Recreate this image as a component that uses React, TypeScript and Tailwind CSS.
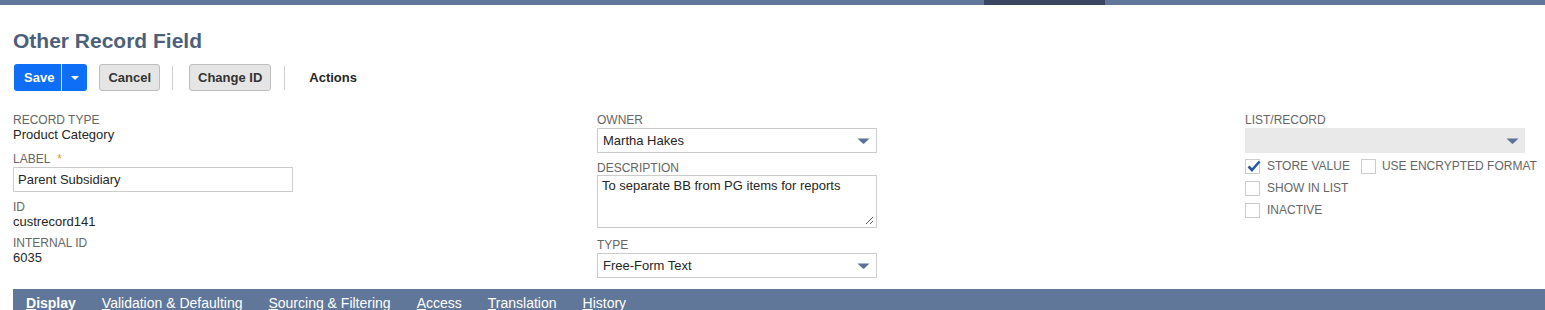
import React from 'react';

const font = { fontFamily: '"Liberation Sans", Arial, sans-serif' };

const Caret = ({ className = '' }: { className?: string }) => (
  <svg width="13" height="6" viewBox="0 0 13 6" className={className}>
    <path d="M0.5 0.5 H12.5 L7.2 5.4 Q6.5 6 5.8 5.4 Z" fill="#5b7399" />
  </svg>
);

const FieldLabel = ({ children }: { children: React.ReactNode }) => (
  <div className="text-[12px] leading-[14px] h-[14px] uppercase text-[#666]">{children}</div>
);

const FieldValue = ({ children }: { children: React.ReactNode }) => (
  <div className="text-[13px] leading-[16px] text-[#262626]">{children}</div>
);

const SelectBox = ({ value, disabled }: { value?: string; disabled?: boolean }) => (
  <div
    className={`flex items-center justify-between w-[280px] h-[25px] pl-[5px] pr-[6px] text-[13px] text-[#262626] ${
      disabled ? 'bg-[#e9e9e9]' : 'bg-white border border-[#cccccc]'
    }`}
  >
    <span>{value}</span>
    <Caret />
  </div>
);

const CheckBox = ({ checked }: { checked?: boolean }) => (
  <div className="relative w-[15px] h-[15px] border border-[#cccccc] bg-white shrink-0">
    {checked && (
      <svg width="14" height="12" viewBox="0 0 14 12" className="absolute left-[1px] top-[0px]">
        <path d="M1.5 6.5 L5 10 L12.5 1.5" fill="none" stroke="#2a5a9e" strokeWidth="2.6" />
      </svg>
    )}
  </div>
);

const tabs = [
  { key: 'D', rest: 'isplay', active: true },
  { key: 'V', rest: 'alidation & Defaulting' },
  { key: 'S', rest: 'ourcing & Filtering' },
  { key: 'A', rest: 'ccess' },
  { key: 'T', rest: 'ranslation' },
  { key: 'H', rest: 'istory' },
];

export default function App() {
  return (
    <div className="w-[1545px] h-[310px] overflow-hidden bg-white" style={font}>
      {/* top strip */}
      <div className="flex h-[5px]">
        <div className="w-[984px] bg-[#607799]" />
        <div className="w-[121px] bg-[#3a4661]" />
        <div className="flex-1 bg-[#607799]" />
      </div>

      <div className="px-[13px]">
        <h1 className="mt-[24px] text-[21px] leading-[24px] font-bold text-[#4d5f79]">Other Record Field</h1>

        {/* toolbar */}
        <div className="flex items-center mt-[11px] h-[27px]">
          <div className="flex h-[27px] ml-px rounded-[3px] bg-[#0f6ef6] text-white">
            <button className="pl-[10px] pr-[7px] text-[13px] font-bold">Save</button>
            <div className="w-px bg-white/80" />
            <button className="w-[25px] flex items-center justify-center">
              <svg width="8" height="4" viewBox="0 0 8 4">
                <path d="M0 0 H8 L4 4 Z" fill="white" />
              </svg>
            </button>
          </div>
          <button className="ml-[12px] h-[27px] px-[8px] rounded-[3px] border border-[#bdbdbd] bg-[#e5e5e5] text-[13px] font-bold text-[#333]">
            Cancel
          </button>
          <div className="ml-[12px] w-px h-[24px] bg-[#cccccc]" />
          <button className="ml-[16px] h-[27px] px-[8px] rounded-[3px] border border-[#bdbdbd] bg-[#e5e5e5] text-[13px] font-bold text-[#333]">
            Change ID
          </button>
          <div className="ml-[13px] w-px h-[24px] bg-[#cccccc]" />
          <span className="ml-[24px] text-[13px] font-bold text-[#262626]">Actions</span>
        </div>

        {/* fields */}
        <div className="grid grid-cols-[584px_648px_1fr] mt-[22px] h-[176px]">
          <div>
            <FieldLabel>Record Type</FieldLabel>
            <FieldValue>Product Category</FieldValue>
            <div className="mt-[9px]">
              <FieldLabel>
                Label <span className="ml-[4px] text-[#d49a27]">*</span>
              </FieldLabel>
              <div className="mt-px w-[280px] h-[25px] border border-[#cccccc] flex items-center pl-[4px] text-[13px] text-[#262626]">
                Parent Subsidiary
              </div>
            </div>
            <div className="mt-[8px]">
              <FieldLabel>ID</FieldLabel>
              <FieldValue>custrecord141</FieldValue>
            </div>
            <div className="mt-[6px]">
              <FieldLabel>Internal ID</FieldLabel>
              <FieldValue>6035</FieldValue>
            </div>
          </div>

          <div>
            <FieldLabel>Owner</FieldLabel>
            <div className="mt-px">
              <SelectBox value="Martha Hakes" />
            </div>
            <div className="mt-[8px]">
              <FieldLabel>Description</FieldLabel>
              <div className="relative w-[280px] h-[53px] border border-[#cccccc] px-[4px] pt-[2px] text-[13px] leading-[16px] text-[#262626]">
                To separate BB from PG items for reports
                <svg width="10" height="10" viewBox="0 0 10 10" className="absolute right-[2px] bottom-[2px]">
                  <path d="M9 2 L2 9 M9 6 L6 9" stroke="#555" strokeWidth="1" />
                </svg>
              </div>
            </div>
            <div className="mt-[10px]">
              <FieldLabel>Type</FieldLabel>
              <div className="mt-px">
                <SelectBox value="Free-Form Text" />
              </div>
            </div>
          </div>

          <div>
            <FieldLabel>List/Record</FieldLabel>
            <div className="mt-px">
              <SelectBox disabled />
            </div>
            <div className="mt-[6px] flex flex-col gap-[7px] text-[12px] leading-[15px] uppercase text-[#666] whitespace-nowrap">
              <div className="flex items-center">
                <CheckBox checked />
                <span className="ml-[7px]">Store Value</span>
                <div className="ml-[11px]">
                  <CheckBox />
                </div>
                <span className="ml-[6px]">Use Encrypted Format</span>
              </div>
              <div className="flex items-center">
                <CheckBox />
                <span className="ml-[7px]">Show in List</span>
              </div>
              <div className="flex items-center">
                <CheckBox />
                <span className="ml-[7px]">Inactive</span>
              </div>
            </div>
          </div>
        </div>
      </div>

      {/* subtabs */}
      <div className="ml-[13px] h-[30px] bg-[#607799] flex pt-[6px] pl-[13px] gap-[26px] text-[14px] leading-[16px] text-white">
        {tabs.map((t) => (
          <span key={t.key} className={t.active ? 'font-bold' : ''}>
            <span className="underline underline-offset-[1px]">{t.key}</span>
            {t.rest}
          </span>
        ))}
      </div>
    </div>
  );
}
